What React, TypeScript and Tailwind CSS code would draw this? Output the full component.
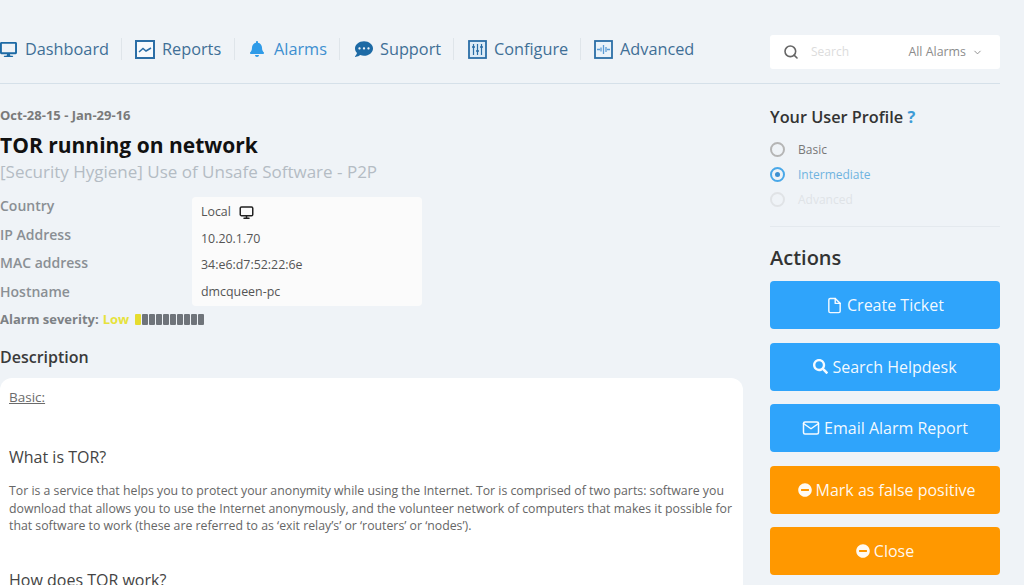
import { ChevronDown, Monitor, Search } from 'lucide-react'
import { FaBell, FaCommentDots, FaDesktop, FaMinusCircle, FaSearch } from 'react-icons/fa'
import { FiFile, FiMail } from 'react-icons/fi'

function ReportsIcon() {
    return (
        <svg width="20" height="19" viewBox="0 0 20 19" fill="none" stroke="#2b6ea6" strokeWidth="2">
            <rect x="1" y="1" width="18" height="17" fill="#f7fafd" />
            <path d="M4 12 L8 8.5 L11 11 L16 8" strokeWidth="1.5" />
        </svg>
    )
}

function ConfigureIcon() {
    return (
        <svg width="19" height="19" viewBox="0 0 19 19" fill="none" stroke="#2b6ea6" strokeWidth="1.8">
            <rect x="1" y="1" width="17" height="17" fill="#dcebf7" />
            <path d="M5.5 4 V15 M9.5 4 V15 M13.5 4 V15" strokeWidth="1.2" />
            <path d="M4 7 H7 M8 11 H11 M12 7 H15" strokeWidth="1.5" />
        </svg>
    )
}

function AdvancedIcon() {
    return (
        <svg width="19" height="19" viewBox="0 0 19 19" fill="none" stroke="#2b6ea6" strokeWidth="1.8">
            <rect x="1" y="1" width="17" height="17" fill="#eaf3fa" />
            <path d="M3 9.5 H6 M7 7.5 V11.5 M9.5 5 V14 M12 7 V12 M13 9.5 H16" stroke="#5a9bd5" strokeWidth="1.3" />
        </svg>
    )
}

const navItems = [
    { label: 'Dashboard', icon: <FaDesktop size={19} className="text-[#1d6aa5]" />, color: 'text-[#3f6f96]', box: 'w-[122px] pl-0 pr-3', gap: 'gap-[8px]' },
    { label: 'Reports', icon: <ReportsIcon />, color: 'text-[#3f6f96]', box: 'w-[113px] pl-[13px]', gap: 'gap-[7px]' },
    { label: 'Alarms', icon: <FaBell size={16} className="text-[#2f9be8]" />, color: 'text-[#3d8fd0]', box: 'w-[105px] pl-[14px]', gap: 'gap-[9px]' },
    { label: 'Support', icon: <FaCommentDots size={18} className="text-[#1d6aa5]" />, color: 'text-[#3f6f96]', box: 'w-[114px] pl-[15px]', gap: 'gap-[7px]' },
    { label: 'Configure', icon: <ConfigureIcon />, color: 'text-[#3f6f96]', box: 'w-[127px] pl-[14px]', gap: 'gap-[7px]' },
    { label: 'Advanced', icon: <AdvancedIcon />, color: 'text-[#3f6f96]', box: 'pl-[13px]', gap: 'gap-[7px]' },
]

const details = [
    { label: 'Country', value: 'Local', icon: true },
    { label: 'IP Address', value: '10.20.1.70' },
    { label: 'MAC address', value: '34:e6:d7:52:22:6e' },
    { label: 'Hostname', value: 'dmcqueen-pc' },
]

const actions = [
    { label: 'Create Ticket', icon: <FiFile size={17} />, color: 'bg-[#2fa4fb]' },
    { label: 'Search Helpdesk', icon: <FaSearch size={15} />, color: 'bg-[#2fa4fb]' },
    { label: 'Email Alarm Report', icon: <FiMail size={18} />, color: 'bg-[#2fa4fb]' },
    { label: 'Mark as false positive', icon: <FaMinusCircle size={14} />, color: 'bg-[#ff9800] pl-[3px]' },
    { label: 'Close', icon: <FaMinusCircle size={14} />, color: 'bg-[#ff9800]' },
]

export default function App() {
    return (
        <div className="h-[585px] w-[1024px] overflow-hidden bg-[#eff3f7] font-['Open_Sans',sans-serif]">
            <div className="w-[1000px]">
                <header className="flex h-[84px] items-start justify-between border-b border-[#d5e0e9]">
                    <nav className="mt-[38px] flex items-center">
                        {navItems.map((item, i) => (
                            <div key={item.label} className={`flex h-[22px] items-center ${item.gap} ${item.box} ${i < navItems.length - 1 ? 'border-r border-[#dfe5ea]' : ''}`}>
                                {item.icon}
                                <span className={`text-[16.3px] leading-none ${item.color}`}>{item.label}</span>
                            </div>
                        ))}
                    </nav>
                    <div className="mt-[35px] flex h-[34px] w-[230px] items-center rounded-[3px] bg-white pl-[13px] pr-[17px]">
                        <Search size={16} strokeWidth={2.4} className="text-[#666]" />
                        <span className="ml-[12px] text-[12px] text-[#dcdcdc]">Search</span>
                        <span className="ml-auto text-[12.4px] text-[#8c8c8c]">All Alarms</span>
                        <ChevronDown size={11} className="ml-[6px] text-[#888]" />
                    </div>
                </header>

                <div className="flex justify-between">
                    <main className="w-[743px]">
                        <p className="mt-[23px] text-[13px] leading-[17px] font-bold text-[#7a7a7a]">Oct-28-15 - Jan-29-16</p>
                        <h1 className="mt-[8px] text-[21px] leading-[27px] font-bold text-[#111]">TOR running on network</h1>
                        <p className="mt-[1px] text-[17px] leading-[24px] text-[#b4bcc4]">[Security Hygiene] Use of Unsafe Software - P2P</p>

                        <div className="mt-[13px] flex">
                            <dl className="w-[192px]">
                                {details.map(row => (
                                    <dt key={row.label} className="h-[28.5px] text-[14px] leading-[18px] font-semibold text-[#8a8f94]">{row.label}</dt>
                                ))}
                            </dl>
                            <div className="h-[109px] w-[230px] rounded-[4px] bg-[#fbfbfb] px-[9px] pt-[2px]">
                                {details.map(row => (
                                    <div key={row.value} className="flex h-[26.6px] items-center gap-[8px] text-[12.4px] text-[#555]">
                                        {row.value}
                                        {row.icon && <Monitor size={15} strokeWidth={2.4} className="text-[#222]" />}
                                    </div>
                                ))}
                            </div>
                        </div>

                        <div className="flex h-[17px] items-center text-[13px] font-bold text-[#7d8185]">
                            Alarm severity:
                            <span className="ml-[4px] text-[#e6e23c]">Low</span>
                            <div className="ml-[6px] flex gap-[1px]">
                                <span className="h-[11px] w-[6px] rounded-[1px] bg-[#e6dc2e]" />
                                {Array.from({ length: 9 }).map((_, i) => (
                                    <span key={i} className="h-[11px] w-[6px] rounded-[1px] bg-[#6f747a]" />
                                ))}
                            </div>
                        </div>

                        <h2 className="mt-[19px] text-[16px] leading-[20px] font-semibold text-[#3a3a3a]">Description</h2>

                        <section className="mt-[11px] h-[300px] rounded-t-[12px] bg-white px-[9px] pt-[9px]">
                            <p className="text-[13.5px] leading-[20px] text-[#6b6b6b] underline">Basic:</p>
                            <h3 className="mt-[39px] text-[16px] leading-[22px] text-[#444]">What is TOR?</h3>
                            <p className="mt-[14px] text-[12.3px] leading-[17.5px] text-[#666]">
                                Tor is a service that helps you to protect your anonymity while using the Internet. Tor is comprised of two parts: software you download that allows you to use the Internet anonymously, and the volunteer network of computers that makes it possible for that software to work (these are referred to as ‘exit relay’s’ or ‘routers’ or ‘nodes’).
                            </p>
                            <h3 className="mt-[34px] text-[16px] leading-[22px] text-[#444]">How does TOR work?</h3>
                        </section>
                    </main>

                    <aside className="w-[230px]">
                        <h2 className="mt-[22px] text-[16.3px] leading-[22px] font-semibold text-[#333]">
                            Your User Profile <span className="font-bold text-[#3d9bd6]">?</span>
                        </h2>
                        <div className="mt-[9px] border-b border-[#e4e9ee] pb-[14px]">
                            <div className="flex h-[25px] items-center gap-[13px] text-[12px] text-[#777]">
                                <span className="h-[15px] w-[15px] rounded-full border-2 border-[#b5b5b5]" />
                                Basic
                            </div>
                            <div className="flex h-[25px] items-center gap-[13px] text-[12px] text-[#6fb3e0]">
                                <span className="flex h-[15px] w-[15px] items-center justify-center rounded-full border-2 border-[#4aa8e8]">
                                    <span className="h-[5px] w-[5px] rounded-full bg-[#3d8fd0]" />
                                </span>
                                Intermediate
                            </div>
                            <div className="flex h-[25px] items-center gap-[13px] text-[12px] text-[#dfe3e7]">
                                <span className="h-[15px] w-[15px] rounded-full border-2 border-[#e0e3e6]" />
                                Advanced
                            </div>
                        </div>

                        <h2 className="mt-[17px] text-[20px] leading-[27px] font-semibold text-[#333]">Actions</h2>
                        <div className="mt-[10px] flex flex-col gap-[13.5px]">
                            {actions.map(a => (
                                <button key={a.label} className={`flex h-[48px] items-center justify-center gap-[4px] rounded-[4px] text-[16px] text-white/95 ${a.color}`}>
                                    {a.icon}
                                    {a.label}
                                </button>
                            ))}
                        </div>
                    </aside>
                </div>
            </div>
        </div>
    )
}
